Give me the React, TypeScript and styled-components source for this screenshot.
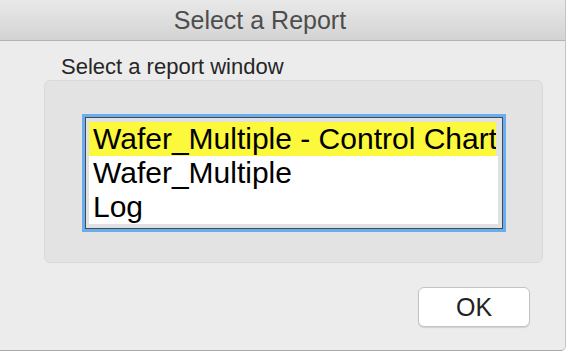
import { createGlobalStyle, styled } from 'styled-components'

const GlobalStyle = createGlobalStyle`
  html, body {
    margin: 0;
    padding: 0;
    background: #ffffff;
  }
  body {
    font-family: 'Liberation Sans', Arial, sans-serif;
  }
`

const reports = ['Wafer_Multiple - Control Chart', 'Wafer_Multiple', 'Log']

const App = () => {
  return (
    <>
      <GlobalStyle />
      <Window>
        <TitleBar>
          <Title>Select a Report</Title>
        </TitleBar>
        <Body>
          <Label>Select a report window</Label>
          <GroupBox>
            <ListFrame>
              {reports.map((name, i) => (
                <ListRow key={name} selected={i === 0}>
                  {name}
                </ListRow>
              ))}
            </ListFrame>
          </GroupBox>
          <Footer>
            <OkButton>OK</OkButton>
          </Footer>
        </Body>
      </Window>
    </>
  )
}

// 대화상자 창
const Window = styled.div`
  display: flex;
  flex-direction: column;
  width: 566px;
  height: 351px;
  background-color: #ececec;
  border-bottom: 1px solid #a9a9a9;
  border-right: 1px solid #c4c4c4;
  border-bottom-right-radius: 5px;
  box-sizing: border-box;
  overflow: hidden;
`

const TitleBar = styled.div`
  display: flex;
  align-items: center;
  justify-content: center;
  height: 41px;
  padding-right: 45px;
  background: linear-gradient(#e9e9e9, #d3d3d3);
  border-bottom: 1px solid #b3b3b3;
  box-sizing: border-box;
`

const Title = styled.span`
  font-size: 25px;
  color: #4d4d4d;
  line-height: 1;
`

const Body = styled.div`
  display: flex;
  flex-direction: column;
  padding-left: 44px;
`

const Label = styled.div`
  margin: 13px 0 0 17px;
  height: 26px;
  font-size: 22px;
  line-height: 26px;
  color: #262626;
`

const GroupBox = styled.div`
  width: 499px;
  height: 183px;
  box-sizing: border-box;
  padding: 36px 0 0 40px;
  background-color: #e3e3e3;
  border: 1px solid #dadada;
  border-radius: 6px;
`

// 목록 상자 (포커스 링 포함)
const ListFrame = styled.div`
  width: 418px;
  box-sizing: border-box;
  padding: 4px 4px 4px 3px;
  background-color: #e1e1e1;
  border: 1px solid #4a4a4a;
  box-shadow: 0 0 0 3px #68adef;
`

const ListRow = styled.div<{ selected?: boolean }>`
  height: 34px;
  padding-left: 4px;
  margin-right: ${({ selected }) => (selected ? '2px' : '0')};
  font-size: 30px;
  line-height: 34px;
  color: #000000;
  white-space: nowrap;
  overflow: hidden;
  background-color: ${({ selected }) => (selected ? '#fcf83b' : '#ffffff')};
`

const Footer = styled.div`
  display: flex;
  justify-content: flex-end;
  padding: 24px 35px 0 0;
`

const OkButton = styled.button`
  width: 112px;
  height: 40px;
  padding: 0;
  font-family: 'Liberation Sans', Arial, sans-serif;
  font-size: 25px;
  color: #222222;
  background-color: #ffffff;
  border: 1px solid #c3c3c3;
  border-radius: 6px;
  box-shadow: 0 1px 1px rgba(0, 0, 0, 0.12);
`

export default App
